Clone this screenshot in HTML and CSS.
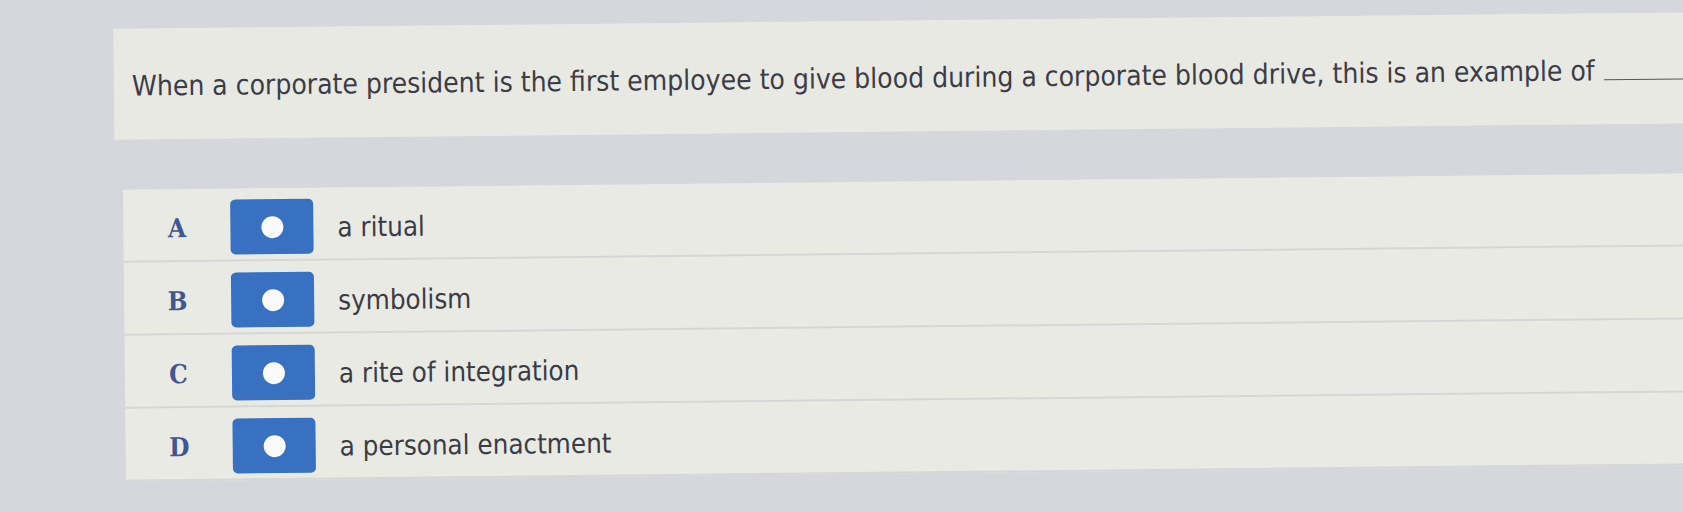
FILE: index.html
```html
<!DOCTYPE html>
<html lang="en">
<head>
<meta charset="utf-8">
<title>Question</title>
<link rel="stylesheet" href="styles.css">
</head>
<body>
<div class="screen">
  <div class="question">
    <p class="prompt">When a corporate president is the first employee to give blood during a corporate blood drive, this is an example of <span class="blank"></span></p>
  </div>
  <div class="options">
    <div class="option">
      <span class="letter">A</span>
      <span class="radio"><span class="dot"></span></span>
      <span class="label">a ritual</span>
    </div>
    <div class="option">
      <span class="letter">B</span>
      <span class="radio"><span class="dot"></span></span>
      <span class="label">symbolism</span>
    </div>
    <div class="option">
      <span class="letter">C</span>
      <span class="radio"><span class="dot"></span></span>
      <span class="label">a rite of integration</span>
    </div>
    <div class="option">
      <span class="letter">D</span>
      <span class="radio"><span class="dot"></span></span>
      <span class="label">a personal enactment</span>
    </div>
  </div>
</div>
</body>
</html>
```

FILE: styles.css
```css
html, body {
  margin: 0;
  height: 100%;
  overflow: hidden;
  background: #d6d7dc;
}

.screen {
  width: 1800px;
  padding: 30px 0 0 113px;
  transform: rotate(-0.6deg);
  transform-origin: 0 0;
}

.question {
  height: 111px;
  box-sizing: border-box;
  padding: 42px 0 0 18px;
  background: #e9e9e3;
}

.prompt {
  margin: 0;
  font-family: "DejaVu Sans Condensed", "DejaVu Sans", sans-serif;
  font-size: 28px;
  line-height: 32px;
  color: #3c3c48;
  white-space: nowrap;
}

.blank {
  display: inline-block;
  width: 140px;
  margin-left: 1px;
  border-bottom: 1px solid #55555f;
}

.options {
  margin: 50px 0 0 8px;
  background: #eaeae5;
}

.option {
  display: flex;
  align-items: center;
  height: 73px;
  box-sizing: border-box;
  padding-top: 6px;
  border-bottom: 2px solid #d5d6d6;
}

.letter {
  width: 107px;
  text-align: center;
  font-family: "DejaVu Serif Condensed", "DejaVu Serif", serif;
  font-weight: bold;
  font-size: 26px;
  color: #3f5792;
}

.radio {
  width: 83px;
  height: 55px;
  margin-right: 24px;
  border-radius: 5px;
  background: #3871c1;
  display: flex;
  align-items: center;
  justify-content: center;
}

.dot {
  width: 22px;
  height: 22px;
  border-radius: 50%;
  background: #fafafa;
}

.label {
  font-family: "DejaVu Sans Condensed", "DejaVu Sans", sans-serif;
  font-size: 27.5px;
  color: #3b3b45;
}
```
